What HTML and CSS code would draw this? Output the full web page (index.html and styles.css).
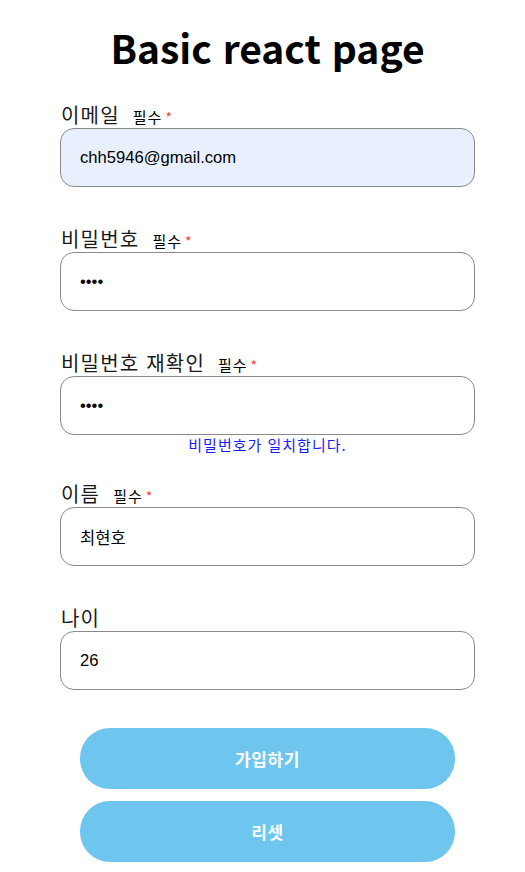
FILE: index.html
```html
<!DOCTYPE html>
<html lang="ko">
<head>
<meta charset="utf-8">
<link rel="stylesheet" href="styles.css">
</head>
<body>
<div class="page">
  <h1 class="title">Basic react page</h1>
  <form class="form">
    <div class="field">
      <label class="label">이메일<span class="req">필수</span><span class="star">*</span></label>
      <input class="input autofill" type="text" value="chh5946@gmail.com">
    </div>
    <div class="field">
      <label class="label">비밀번호<span class="req">필수</span><span class="star">*</span></label>
      <input class="input" type="password" value="1234">
    </div>
    <div class="field">
      <label class="label">비밀번호 재확인<span class="req">필수</span><span class="star">*</span></label>
      <input class="input" type="password" value="1234">
      <p class="msg">비밀번호가 일치합니다.</p>
    </div>
    <div class="field">
      <label class="label">이름<span class="req">필수</span><span class="star">*</span></label>
      <input class="input" type="text" value="최현호">
    </div>
    <div class="field">
      <label class="label">나이</label>
      <input class="input" type="text" value="26">
    </div>
    <div class="buttons">
      <button class="btn" type="button">가입하기</button>
      <button class="btn" type="button">리셋</button>
    </div>
  </form>
</div>
</body>
</html>
```

FILE: styles.css
```css
* { box-sizing: border-box; }
html, body { margin: 0; padding: 0; background: #fff; }
body {
  font-family: "Noto Sans CJK KR", "Noto Sans", sans-serif;
  color: #000;
}
.page {
  width: 415px;
  margin-left: 60px;
  padding-top: 21px;
}
.title {
  margin: 0;
  text-align: center;
  font-size: 39px;
  font-weight: 700;
  line-height: 52px;
}
.form {
  display: flex;
  flex-direction: column;
  margin-top: 29px;
}
.field {
  display: flex;
  flex-direction: column;
  margin-bottom: 39px;
}
.label {
  display: flex;
  align-items: baseline;
  height: 26px;
  padding-left: 1px;
  font-size: 20px;
  line-height: 26px;
  letter-spacing: 1.2px;
  font-weight: 400;
  color: #1a1a1a;
}
.req {
  font-size: 15px;
  letter-spacing: 1px;
  margin-left: 13px;
  color: #000;
}
.star {
  color: #ff3b3b;
  font-size: 14px;
  margin-left: 3px;
}
.input {
  width: 415px;
  height: 59px;
  border: 1px solid #8a8a8a;
  border-radius: 14px;
  padding: 0 19px;
  font-family: "Liberation Sans", Arial, "Noto Sans CJK KR", sans-serif;
  font-size: 16.6px;
  color: #000;
  background: #fff;
  outline: none;
}
.input.autofill { background: #e8f0fe; }
.msg {
  margin: 0 0 -13px;
  text-align: center;
  color: #1a1aff;
  font-size: 15px;
  letter-spacing: 1px;
  line-height: 20px;
}
.buttons {
  display: flex;
  flex-direction: column;
  align-items: center;
  gap: 12px;
  margin-top: -1px;
}
.btn {
  width: 375px;
  height: 61px;
  border: none;
  border-radius: 30px;
  background: #6ec6ef;
  color: #fff;
  font-family: "Noto Sans CJK KR", sans-serif;
  font-size: 17px;
  letter-spacing: 0.6px;
  font-weight: 700;
}
```
